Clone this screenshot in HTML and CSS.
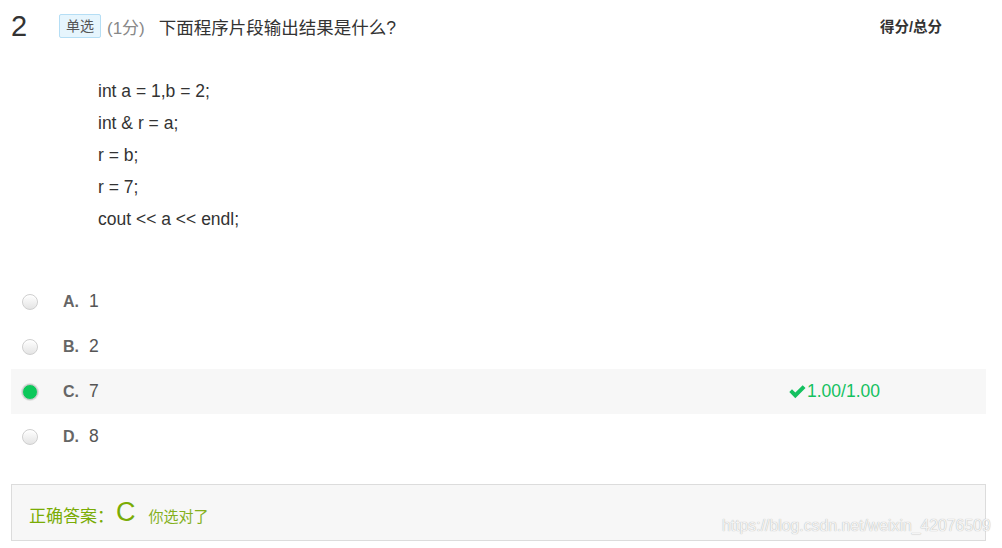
FILE: index.html
```html
<!DOCTYPE html>
<html lang="zh-CN">
<head>
<meta charset="utf-8">
<title>题目 2</title>
<link rel="stylesheet" href="styles.css">
</head>
<body>
<div class="question">
  <div class="q-head">
    <span class="q-num">2</span>
    <span class="q-tag">单选</span>
    <span class="q-score">(1分)</span>
    <span class="q-title">下面程序片段输出结果是什么?</span>
    <span class="q-total">得分/总分</span>
  </div>
  <div class="q-code">
    <p>int a = 1,b = 2;</p>
    <p>int &amp; r = a;</p>
    <p>r = b;</p>
    <p>r = 7;</p>
    <p>cout &lt;&lt; a &lt;&lt; endl;</p>
  </div>
  <ul class="options">
    <li class="option"><span class="radio"></span><span class="opt-key">A.</span><span class="opt-val">1</span></li>
    <li class="option"><span class="radio"></span><span class="opt-key">B.</span><span class="opt-val">2</span></li>
    <li class="option selected"><span class="radio checked"></span><span class="opt-key">C.</span><span class="opt-val">7</span>
      <span class="opt-result"><svg class="check" viewBox="0 0 17 14" width="17" height="14"><path d="M0.3 7 L3 4.3 L6.3 7.6 L13.7 0.2 L16.5 3 L6.3 13.3 Z" fill="#14c160"/></svg>1.00/1.00</span>
    </li>
    <li class="option"><span class="radio"></span><span class="opt-key">D.</span><span class="opt-val">8</span></li>
  </ul>
  <div class="answer">
    <span class="ans-label">正确答案：</span><span class="ans-letter">C</span><span class="ans-note">你选对了</span>
  </div>
</div>
<div class="watermark">https://blog.csdn.net/weixin_42076509</div>
</body>
</html>
```
FILE: styles.css
```css
html, body {
  margin: 0;
  padding: 0;
  background: #fff;
}
body {
  font-family: "Liberation Sans", "Noto Sans CJK SC", sans-serif;
  color: #333;
  position: relative;
  width: 1002px;
  height: 548px;
  overflow: hidden;
}
.question {
  padding: 0 16px 0 11px;
}
.q-head {
  height: 52px;
  display: flex;
  align-items: center;
}
.q-num {
  font-size: 29px;
  color: #333;
  width: 48px;
  line-height: 1;
}
.q-tag {
  font-size: 14px;
  color: #555;
  background: #e6f5fd;
  border: 1px solid #b5def5;
  border-radius: 2px;
  padding: 0 6px;
  height: 22px;
  line-height: 22px;
}
.q-score {
  font-size: 17px;
  color: #888;
  margin-left: 6px;
}
.q-title {
  font-size: 17.5px;
  color: #333;
  margin-left: 14px;
}
.q-total {
  margin-left: auto;
  margin-right: 44px;
  font-size: 14.5px;
  font-weight: bold;
  color: #333;
  margin-top: -2px;
}
.q-code {
  margin-top: 23px;
  padding-left: 87px;
  font-size: 17.5px;
  color: #333;
}
.q-code p {
  margin: 0;
  height: 32px;
  line-height: 32px;
}
.options {
  list-style: none;
  margin: 44px 0 0;
  padding: 0;
}
.option {
  height: 45px;
  display: flex;
  align-items: center;
  padding-left: 11px;
}
.option.selected {
  background: #f7f7f7;
}
.radio {
  width: 14px;
  height: 14px;
  border-radius: 50%;
  border: 1px solid #cfcfcf;
  background: linear-gradient(#ffffff, #e4e4e4);
  box-shadow: inset 0 1px 1px #fff;
  flex: none;
}
.radio.checked {
  background: #0cc85a;
  box-shadow: 0 0 0 1px #e0e0e0;
  border-color: #c8c8c8;
}
.opt-key {
  margin-left: 25px;
  font-size: 16px;
  font-weight: bold;
  color: #666;
  width: 26px;
}
.opt-val {
  font-size: 17.5px;
  color: #555;
}
.opt-result {
  margin-left: auto;
  margin-right: 106px;
  display: flex;
  align-items: center;
  font-size: 17.5px;
  color: #14c160;
}
.check {
  margin-right: 1px;
}
.answer {
  margin-top: 25px;
  height: 55px;
  border: 1px solid #dcdcdc;
  background: #f7f7f7;
  display: flex;
  align-items: center;
  padding-left: 17px;
  color: #7aac05;
}
.ans-label {
  font-size: 17px;
  margin-top: 3px;
}
.ans-letter {
  font-size: 27px;
  margin-left: 2px;
}
.ans-note {
  font-size: 15px;
  margin-left: 13px;
  margin-top: 5px;
  color: #84b01c;
}
.watermark {
  position: absolute;
  left: 722px;
  top: 517px;
  font-size: 15.8px;
  color: #f4f4f4;
  text-shadow: 0 0 1px #a0a0a0;
  white-space: nowrap;
}
```
